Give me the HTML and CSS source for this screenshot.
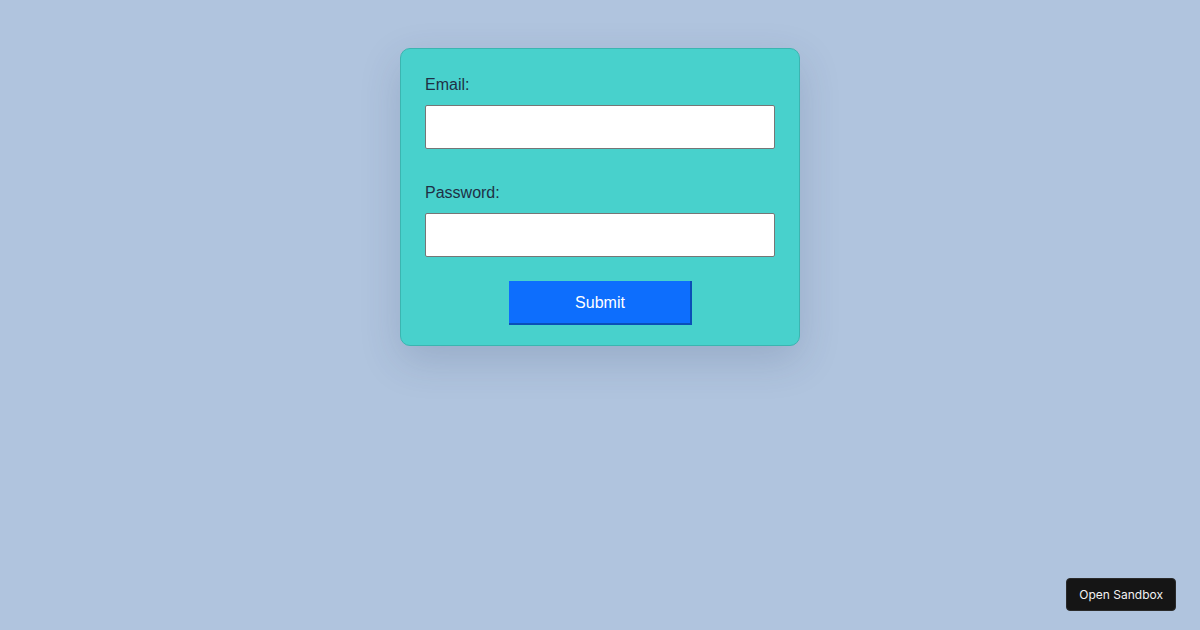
FILE: index.html
```html
<!DOCTYPE html>
<html lang="en">
  <head>
    <meta charset="UTF-8" />
    <meta name="viewport" content="width=device-width, initial-scale=1.0" />
    <title>Login Form</title>
    <link rel="stylesheet" href="styles.css">
  </head>
  <body>
    <form class="login-form" onsubmit="return false;">
      <label for="email">Email:</label>
      <input type="email" id="email" />

      <label for="password" class="second">Password:</label>
      <input type="password" id="password" />

      <button type="submit">Submit</button>
    </form>

    <a href="#" class="sandbox-link">Open Sandbox</a>
  </body>
</html>
```

FILE: styles.css
```css
body {
  font-family: "Liberation Sans", Arial, sans-serif;
  background-color: #b0c4de;
  margin: 0;
  padding: 0;
  height: 630px;
}

.login-form {
  width: 350px;
  margin: 48px auto 0;
  padding: 27px 24px 20px;
  background-color: #48d1cc;
  border: 1px solid #3bb5b0;
  border-radius: 10px;
  box-shadow: 0 14px 40px rgba(40, 60, 100, 0.18);
  display: flex;
  flex-direction: column;
}

label {
  font-size: 16px;
  line-height: 18px;
  color: #1f3045;
  margin-bottom: 11px;
}

label.second {
  margin-top: 35px;
}

input {
  box-sizing: border-box;
  width: 100%;
  height: 44px;
  border: 1px solid #767676;
  border-radius: 2px;
  background: #fff;
  font-size: 16px;
  padding: 0 10px;
  margin: 0;
}

button {
  align-self: center;
  width: 183px;
  height: 44px;
  margin-top: 24px;
  font-family: "Liberation Sans", Arial, sans-serif;
  font-size: 16px;
  color: #fff;
  background-color: #0d6efd;
  border: none;
  border-right: 2px solid #0a4fb8;
  border-bottom: 2px solid #0a4fb8;
  padding: 2px 0 0 2px;
  cursor: pointer;
}

.sandbox-link {
  position: fixed;
  right: 24px;
  bottom: 19px;
  background-color: #151515;
  color: #f2f2f2;
  font-family: Inter, "Noto Sans", sans-serif;
  font-size: 12px;
  line-height: 15px;
  text-decoration: none;
  padding: 8px 12px;
  border-radius: 4px;
  border: 1px solid #2a2a2a;
}
```
